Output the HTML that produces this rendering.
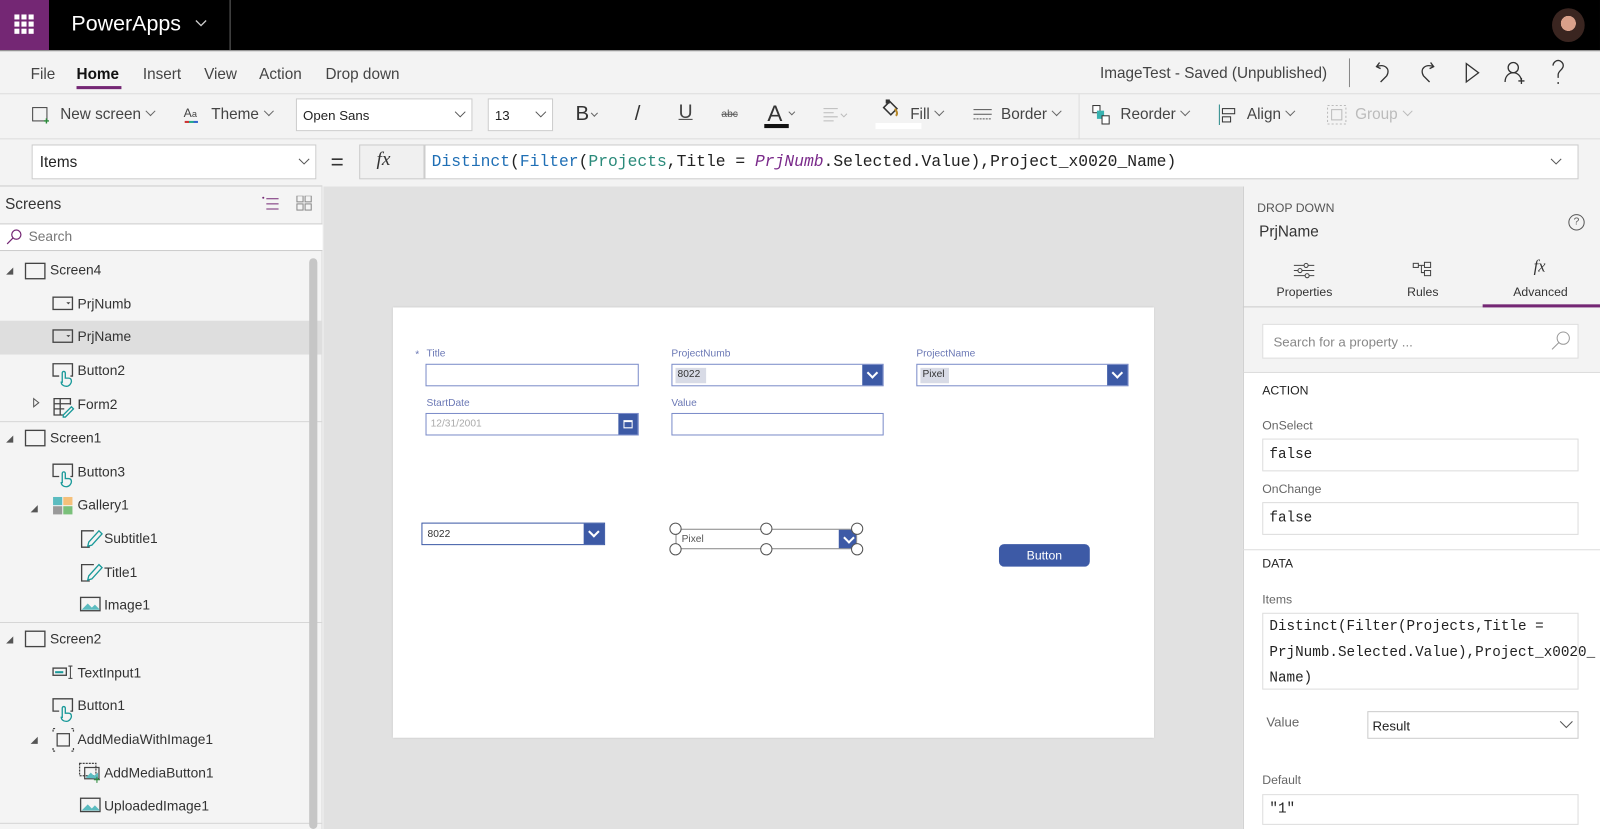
<!DOCTYPE html>
<html><head><meta charset="utf-8">
<style>
*{box-sizing:border-box;margin:0;padding:0}
html,body{width:1600px;height:829px;overflow:hidden;background:#f3f3f3;font-family:"Liberation Sans",sans-serif}
#s{position:absolute;left:0;top:0;width:1568px;height:809px;transform:scale(1.0204,1.0247);transform-origin:0 0}
.a{position:absolute}
.t{position:absolute;white-space:nowrap}
.mono{font-family:"Liberation Mono",monospace}
.chev{display:inline-block;width:7px;height:7px;border-right:1px solid #666;border-bottom:1px solid #666;transform:rotate(45deg);margin-left:6px;position:relative;top:-4px}
.tb{font-size:15px;color:#444;top:103px}
.row{position:absolute;left:0;width:302px;height:32px;font-size:13.5px;color:#333}
.row span{position:absolute;top:8px}
.lbl{position:absolute;font-size:10px;color:#6b78b5}
.inp{position:absolute;border:1px solid #7b8cc9;background:#fff}
.dbtn{position:absolute;right:0;top:0;bottom:0;width:20px;background:#3d5aa6}
.dbtn:after{content:"";position:absolute;left:6px;top:4px;width:6px;height:6px;border-right:2px solid #fff;border-bottom:2px solid #fff;transform:rotate(45deg)}
.h{position:absolute;width:12px;height:12px;border:1px solid #555;border-radius:50%;background:#fff}
.pl{position:absolute;left:1237px;font-size:12px;color:#666}
.pi{position:absolute;left:1237px;width:310px;background:#fff;border:1px solid #ddd;font-family:"Liberation Mono",monospace;font-size:14px;color:#222;padding-left:6px}
</style></head><body><div id="s">
<div class="a" style="left:0;top:0;width:1568px;height:49px;background:#000"></div>
<div class="a" style="left:0;top:0;width:48px;height:49px;background:#742774"></div>
<svg class="a" style="left:14px;top:14px" width="20" height="20"><g fill="#fff"><rect x="0" y="0" width="5" height="5"/><rect x="7" y="0" width="5" height="5"/><rect x="14" y="0" width="5" height="5"/><rect x="0" y="7" width="5" height="5"/><rect x="7" y="7" width="5" height="5"/><rect x="14" y="7" width="5" height="5"/><rect x="0" y="14" width="5" height="5"/><rect x="7" y="14" width="5" height="5"/><rect x="14" y="14" width="5" height="5"/></g></svg>
<div class="t" style="left:70px;top:12px;font-size:21px;color:#fff">PowerApps</div>
<svg class="a" style="left:191px;top:19px" width="12" height="8"><path d="M1 1l5 5 5-5" stroke="#ccc" fill="none" stroke-width="1.3"/></svg>
<div class="a" style="left:225px;top:0;width:1px;height:49px;background:#666"></div>
<div class="a" style="left:1521px;top:8px;width:32px;height:33px;border-radius:50%;background:radial-gradient(circle at 50% 45%,#d9a08a 0 30%,#3a2520 31% 100%)"></div>
<div class="a" style="left:0;top:49px;width:1568px;height:43px;background:#f3f3f3;border-top:1px solid #888;border-bottom:1px solid #ddd"></div>
<div class="t" style="left:30px;top:64px;font-size:15px;color:#444">File</div>
<div class="t" style="left:75px;top:64px;font-size:15px;color:#111;font-weight:bold">Home</div>
<div class="a" style="left:75px;top:84px;width:44px;height:3px;background:#742774"></div>
<div class="t" style="left:140px;top:64px;font-size:15px;color:#444">Insert</div>
<div class="t" style="left:200px;top:64px;font-size:15px;color:#444">View</div>
<div class="t" style="left:254px;top:64px;font-size:15px;color:#444">Action</div>
<div class="t" style="left:319px;top:64px;font-size:15px;color:#444">Drop down</div>
<div class="t" style="left:1078px;top:63px;font-size:15px;color:#444">ImageTest - Saved (Unpublished)</div>
<div class="a" style="left:1322px;top:57px;width:1px;height:28px;background:#888"></div>
<svg class="a" style="left:1346px;top:58px" width="200" height="26" fill="none" stroke="#333" stroke-width="1.3">
<path d="M6 3l-3 4 4 2M3 7c8-3 14 2 10 9l-6 6"/>
<path d="M56 3l3 4-4 2M59 7c-8-3-14 2-10 9l6 6"/>
<path d="M91 4v18l12-9z"/>
<circle cx="137" cy="8" r="5"/><path d="M129 22c0-6 4-9 8-9s8 3 8 9M145 18v6M142 21h6"/>
<path d="M176 6c0-3 3-5 5-5s5 2 5 5c0 4-5 5-5 9v3M181 22v2"/>
</svg>
<div class="a" style="left:0;top:92px;width:1568px;height:44px;border-bottom:1px solid #ddd"></div>
<svg class="a" style="left:31px;top:104px" width="18" height="18" fill="none"><rect x="1" y="1" width="14" height="13" stroke="#444"/><path d="M12 14h5M14.5 11.5v5" stroke="#2a8a3a" stroke-width="1.4"/></svg>
<div class="t tb" style="left:59px">New screen<span class="chev"></span></div>
<div class="t" style="left:180px;top:103px;font-size:12px;color:#444">A<span style="font-size:9px">a</span></div>
<div class="a" style="left:181px;top:118px;width:13px;height:2px;background:linear-gradient(90deg,#c33 0 33%,#2a8 33% 66%,#36c 66%)"></div>
<div class="t tb" style="left:207px">Theme<span class="chev"></span></div>
<div class="a" style="left:290px;top:96px;width:173px;height:32px;background:#fff;border:1px solid #ccc"></div>
<div class="t" style="left:297px;top:105px;font-size:13px;color:#222">Open Sans</div>
<svg class="a" style="left:445px;top:108px" width="12" height="8"><path d="M1 1l5 5 5-5" stroke="#555" fill="none"/></svg>
<div class="a" style="left:478px;top:96px;width:64px;height:32px;background:#fff;border:1px solid #ccc"></div>
<div class="t" style="left:485px;top:105px;font-size:13px;color:#222">13</div>
<svg class="a" style="left:524px;top:108px" width="12" height="8"><path d="M1 1l5 5 5-5" stroke="#555" fill="none"/></svg>
<div class="t" style="left:564px;top:100px;font-size:20px;color:#333">B<span class="chev" style="width:5px;height:5px;margin-left:3px"></span></div>
<div class="t" style="left:622px;top:100px;font-size:20px;color:#333">/</div>
<div class="t" style="left:665px;top:99px;font-size:19px;color:#444;text-decoration:underline">U</div>
<div class="t" style="left:707px;top:106px;font-size:10px;color:#555;text-decoration:line-through">abc</div>
<div class="t" style="left:752px;top:98px;font-size:22px;color:#333">A</div>
<div class="a" style="left:749px;top:121px;width:24px;height:4px;background:#111"></div>
<svg class="a" style="left:772px;top:108px" width="8" height="6"><path d="M1 1l3 3 3-3" stroke="#666" fill="none"/></svg>
<svg class="a" style="left:807px;top:104px" width="26" height="16" stroke="#bbb"><path d="M0 2h14M0 6h10M0 10h14M0 14h10M17 7l3 3 3-3" fill="none"/></svg>
<svg class="a" style="left:862px;top:97px" width="22" height="22"><path d="M4 8l6-6 7 7-6 6z" fill="none" stroke="#333" stroke-width="1.5"/><path d="M15 9c2 3 3 5 1 7" stroke="#b8892a" stroke-width="2" fill="none"/><rect x="6" y="0" width="4" height="4" fill="#333"/></svg>
<div class="a" style="left:858px;top:120px;width:45px;height:6px;background:#fff"></div>
<div class="t tb" style="left:892px">Fill<span class="chev"></span></div>
<svg class="a" style="left:954px;top:106px" width="18" height="12" stroke="#555"><path d="M0 1h18M0 5.5h18" /><path d="M0 10h18" stroke-dasharray="2 1"/></svg>
<div class="t tb" style="left:981px">Border<span class="chev"></span></div>
<div class="a" style="left:1057px;top:92px;width:1px;height:44px;background:#ddd"></div>
<svg class="a" style="left:1070px;top:102px" width="18" height="20"><rect x="1" y="1" width="7" height="7" fill="#fff" stroke="#333"/><rect x="5" y="6" width="7" height="8" fill="#38b2b0"/><rect x="10" y="11" width="7" height="8" fill="#fff" stroke="#333"/></svg>
<div class="t tb" style="left:1098px">Reorder<span class="chev"></span></div>
<svg class="a" style="left:1194px;top:102px" width="20" height="20" fill="none" stroke="#333"><path d="M1 0v20" stroke="#2a8a8a"/><rect x="4" y="4" width="12" height="5"/><rect x="4" y="12" width="8" height="5"/></svg>
<div class="t tb" style="left:1222px">Align<span class="chev"></span></div>
<svg class="a" style="left:1300px;top:102px" width="20" height="20" fill="none" stroke="#bbb" stroke-dasharray="2 2"><rect x="1" y="1" width="18" height="18"/><rect x="5" y="5" width="10" height="10" stroke-dasharray="0"/></svg>
<div class="t tb" style="left:1328px;color:#bbb">Group<span class="chev" style="border-color:#bbb"></span></div>
<div class="a" style="left:31px;top:141px;width:279px;height:34px;background:#fff;border:1px solid #ccc"></div>
<div class="t" style="left:39px;top:150px;font-size:15px;color:#222">Items</div>
<svg class="a" style="left:292px;top:154px" width="12" height="8"><path d="M1 1l5 5 5-5" stroke="#555" fill="none"/></svg>
<div class="t" style="left:324px;top:145px;font-size:22px;color:#333">=</div>
<div class="a" style="left:352px;top:141px;width:64px;height:34px;background:#f0f0f0;border:1px solid #ccc"></div>
<div class="t" style="left:369px;top:145px;font-size:19px;font-style:italic;font-family:'Liberation Serif',serif;color:#333">fx</div>
<div class="a" style="left:416px;top:141px;width:1131px;height:34px;background:#fff;border:1px solid #ccc"></div>
<div class="t mono" style="left:423px;top:149px;font-size:16px;color:#222"><span style="color:#1f6fb5">Distinct</span>(<span style="color:#1f6fb5">Filter</span>(<span style="color:#2a8a7a">Projects</span>,Title = <i style="color:#7a2a8a">PrjNumb</i>.Selected.Value),Project_x0020_Name)</div>
<svg class="a" style="left:1519px;top:154px" width="12" height="8"><path d="M1 1l5 5 5-5" stroke="#555" fill="none"/></svg>
<div class="a" style="left:0;top:181px;width:316px;height:628px;background:#f4f4f4;border-right:1px solid #ddd;border-top:1px solid #ccc"></div>
<div class="t" style="left:5px;top:191px;font-size:15px;color:#333">Screens</div>
<svg class="a" style="left:256px;top:191px" width="50" height="16"><path d="M5 3h12M5 8h12M5 13h12" stroke="#742774"/><circle cx="2" cy="2" r="1" fill="#742774"/><g fill="none" stroke="#888"><rect x="35" y="0" width="6" height="6"/><rect x="43" y="0" width="6" height="6"/><rect x="35" y="8" width="6" height="6"/><rect x="43" y="8" width="6" height="6"/></g></svg>
<div class="a" style="left:0;top:218px;width:316px;height:27px;background:#fff;border-top:1px solid #ccc;border-bottom:1px solid #ccc"></div>
<svg class="a" style="left:6px;top:223px" width="16" height="16" fill="none" stroke="#742774" stroke-width="1.2"><circle cx="10" cy="6" r="4.5"/><path d="M7 9l-6 6"/></svg>
<div class="t" style="left:28px;top:223px;font-size:13.5px;color:#777">Search</div>
<div class="a" style="left:0;top:313px;width:316px;height:33px;background:#dedede"></div>
<div class="a" style="left:0;top:411px;width:316px;height:1px;background:#d6d6d6"></div>
<div class="a" style="left:0;top:607px;width:316px;height:1px;background:#d6d6d6"></div>
<div class="a" style="left:0;top:803px;width:316px;height:1px;background:#d6d6d6"></div>
<div class="a" style="left:303px;top:252px;width:8px;height:557px;background:#c6c6c6;border-radius:4px"></div>
<svg class="a" style="left:0;top:248px" width="300" height="560">
<g fill="#555"><path d="M6 20l7-7v7z"/><path d="M6 184l7-7v7z"/><path d="M30 252l7-7v7z"/><path d="M6 380l7-7v7z"/><path d="M30 478l7-7v7z"/></g>
<path d="M33 141l5 4-5 4z" fill="none" stroke="#555"/>
<g fill="none" stroke="#444" stroke-width="1.3">
<rect x="25" y="9" width="19" height="15"/><rect x="25" y="172" width="19" height="15"/><rect x="25" y="368" width="19" height="15"/>
<rect x="52" y="42" width="19" height="12"/><rect x="52" y="74" width="19" height="12"/>
</g>
<path d="M65 47l2 2 2-2z" fill="#444"/><path d="M65 79l2 2 2-2z" fill="#444"/>
<g fill="none" stroke-width="1.3">
<path d="M58 119h-6v-12h19v12h-2" stroke="#444"/><path d="M61 125v-9a1.5 1.5 0 013 0v5h3c2 0 3 1 3 3s-2 5-5 5-5-2-5-4z" stroke="#1a9a9a"/>
<path d="M58 217h-6v-12h19v12h-2" stroke="#444"/><path d="M61 223v-9a1.5 1.5 0 013 0v5h3c2 0 3 1 3 3s-2 5-5 5-5-2-5-4z" stroke="#1a9a9a"/>
<path d="M58 446h-6v-12h19v12h-2" stroke="#444"/><path d="M61 452v-9a1.5 1.5 0 013 0v5h3c2 0 3 1 3 3s-2 5-5 5-5-2-5-4z" stroke="#1a9a9a"/>
<path d="M62 157h-9v-16h16v6M53 146h16M53 151h10M59 141v16" stroke="#444"/><path d="M62 157l8-8 2 2-8 8h-2z" stroke="#1a9a9a"/>
</g>
<rect x="52" y="237" width="9" height="8" fill="#5bbcc0"/><rect x="62" y="237" width="9" height="8" fill="#f5c07a"/><rect x="52" y="246" width="9" height="8" fill="#999"/><rect x="62" y="246" width="9" height="8" fill="#7ac07a"/>
<g fill="none" stroke-width="1.3"><path d="M88 286h-8v-16h12" stroke="#444"/><path d="M97 270l-10 11-1 4 4-1 10-11z" stroke="#1a9a9a"/>
<path d="M88 319h-8v-16h12" stroke="#444"/><path d="M97 303l-10 11-1 4 4-1 10-11z" stroke="#1a9a9a"/></g>
<rect x="79" y="335" width="19" height="13" fill="none" stroke="#444" stroke-width="1.3"/><path d="M80 347l6-6 4 4 3-3 5 5z" fill="#5bbcc0"/>
<rect x="79" y="531" width="19" height="13" fill="none" stroke="#444" stroke-width="1.3"/><path d="M80 543l6-6 4 4 3-3 5 5z" fill="#5bbcc0"/>
<rect x="52" y="404" width="13" height="7" fill="none" stroke="#444" stroke-width="1.3"/><rect x="54" y="407" width="8" height="2" fill="#1a9a9a"/><path d="M67 402h4M69 402v12M67 414h4" stroke="#444" fill="none"/>
<g fill="none" stroke="#444" stroke-width="1.2"><rect x="56" y="468" width="12" height="12"/><path d="M52 466v-3h3M72 466v-3h-3M52 482v3h3M72 482v3h-3" stroke-dasharray="2 1"/></g>
<g fill="none" stroke="#444" stroke-width="1.2"><rect x="78" y="497" width="16" height="12" stroke-dasharray="2 1"/><rect x="83" y="501" width="14" height="11"/></g><path d="M84 511l5-5 3 3 4-3v6z" fill="#5bbcc0"/><path d="M95 510v6M92 513h6" stroke="#2a8a3a"/>
</svg>
<div class="row" style="top:248px"><span style="left:49px">Screen4</span></div>
<div class="row" style="top:281px"><span style="left:76px">PrjNumb</span></div>
<div class="row" style="top:313px"><span style="left:76px">PrjName</span></div>
<div class="row" style="top:346px"><span style="left:76px">Button2</span></div>
<div class="row" style="top:379px"><span style="left:76px">Form2</span></div>
<div class="row" style="top:412px"><span style="left:49px">Screen1</span></div>
<div class="row" style="top:445px"><span style="left:76px">Button3</span></div>
<div class="row" style="top:477px"><span style="left:76px">Gallery1</span></div>
<div class="row" style="top:510px"><span style="left:102px">Subtitle1</span></div>
<div class="row" style="top:543px"><span style="left:102px">Title1</span></div>
<div class="row" style="top:575px"><span style="left:102px">Image1</span></div>
<div class="row" style="top:608px"><span style="left:49px">Screen2</span></div>
<div class="row" style="top:641px"><span style="left:76px">TextInput1</span></div>
<div class="row" style="top:673px"><span style="left:76px">Button1</span></div>
<div class="row" style="top:706px"><span style="left:76px">AddMediaWithImage1</span></div>
<div class="row" style="top:739px"><span style="left:102px">AddMediaButton1</span></div>
<div class="row" style="top:771px"><span style="left:102px">UploadedImage1</span></div>
<div class="a" style="left:317px;top:182px;width:901px;height:627px;background:#e1e1e1"></div>
<div class="a" style="left:385px;top:300px;width:746px;height:420px;background:#fff;box-shadow:0 0 2px rgba(0,0,0,.2)"></div>
<div class="t" style="left:407px;top:341px;font-size:10px;color:#6b78b5">*</div>
<div class="t lbl" style="left:418px;top:340px">Title</div>
<div class="inp" style="left:417px;top:355px;width:209px;height:22px"></div>
<div class="t lbl" style="left:658px;top:340px">ProjectNumb</div>
<div class="inp" style="left:658px;top:355px;width:208px;height:22px"><div class="a" style="left:3px;top:3px;width:30px;height:15px;background:#d8dbe6"></div><div class="t" style="left:5px;top:4px;font-size:10px;color:#333">8022</div><div class="dbtn"></div></div>
<div class="t lbl" style="left:898px;top:340px">ProjectName</div>
<div class="inp" style="left:898px;top:355px;width:208px;height:22px"><div class="a" style="left:3px;top:3px;width:28px;height:15px;background:#d8dbe6"></div><div class="t" style="left:5px;top:4px;font-size:10px;color:#333">Pixel</div><div class="dbtn"></div></div>
<div class="t lbl" style="left:418px;top:388px">StartDate</div>
<div class="inp" style="left:417px;top:403px;width:209px;height:22px"><div class="t" style="left:4px;top:4px;font-size:10px;color:#aaa">12/31/2001</div><div class="a" style="right:0;top:0;bottom:0;width:19px;background:#3d5aa6"><div class="a" style="left:5px;top:6px;width:9px;height:8px;border:1px solid #fff;border-top-width:2px"></div></div></div>
<div class="t lbl" style="left:658px;top:388px">Value</div>
<div class="inp" style="left:658px;top:403px;width:208px;height:22px"></div>
<div class="inp" style="left:413px;top:510px;width:180px;height:22px;border-color:#3d5aa6"><div class="t" style="left:5px;top:5px;font-size:10px;color:#333">8022</div><div class="dbtn"></div></div>
<div class="inp" style="left:662px;top:516px;width:178px;height:20px;border:1px solid #888"><div class="t" style="left:5px;top:4px;font-size:10px;color:#555">Pixel</div><div class="dbtn" style="width:17px"></div></div>
<div class="h" style="left:656px;top:510px"></div><div class="h" style="left:745px;top:510px"></div><div class="h" style="left:834px;top:510px"></div>
<div class="h" style="left:656px;top:530px"></div><div class="h" style="left:745px;top:530px"></div><div class="h" style="left:834px;top:530px"></div>
<div class="a" style="left:979px;top:531px;width:89px;height:22px;background:#3d5aa6;border-radius:5px;color:#fff;font-size:12px;text-align:center;line-height:22px">Button</div>
<div class="a" style="left:1218px;top:182px;width:350px;height:181px;background:#f3f3f3;border-left:1px solid #ccc"></div>
<div class="a" style="left:1218px;top:363px;width:350px;height:446px;background:#fff;border-left:1px solid #ccc;border-top:1px solid #ddd"></div>
<div class="t" style="left:1232px;top:196px;font-size:12px;color:#555">DROP DOWN</div>
<div class="t" style="left:1234px;top:218px;font-size:15px;color:#333">PrjName</div>
<div class="a" style="left:1537px;top:209px;width:16px;height:16px;border:1px solid #555;border-radius:50%;font-size:10px;text-align:center;line-height:14px;color:#555">?</div>
<svg class="a" style="left:1267px;top:255px" width="22" height="18" stroke="#444" fill="#f3f3f3"><path d="M1 4h20M1 9h20M1 14h20"/><circle cx="13" cy="4" r="2"/><circle cx="7" cy="9" r="2"/><circle cx="14" cy="14" r="2"/></svg>
<div class="t" style="left:1251px;top:278px;font-size:12px;color:#333">Properties</div>
<svg class="a" style="left:1384px;top:255px" width="20" height="16" fill="none" stroke="#444"><rect x="1" y="2" width="5" height="4"/><rect x="12" y="1" width="6" height="5"/><rect x="12" y="9" width="6" height="5"/><path d="M6 4h6M9 4v7h3"/></svg>
<div class="t" style="left:1379px;top:278px;font-size:12px;color:#333">Rules</div>
<div class="t" style="left:1503px;top:252px;font-size:16px;font-style:italic;font-family:'Liberation Serif',serif;color:#333">fx</div>
<div class="t" style="left:1483px;top:278px;font-size:12px;color:#333">Advanced</div>
<div class="a" style="left:1218px;top:299px;width:350px;height:1px;background:#ccc"></div>
<div class="a" style="left:1453px;top:297px;width:115px;height:3px;background:#742774"></div>
<div class="a" style="left:1237px;top:316px;width:310px;height:34px;background:#fff;border:1px solid #ddd"></div>
<div class="t" style="left:1248px;top:326px;font-size:13px;color:#888">Search for a property ...</div>
<svg class="a" style="left:1520px;top:323px" width="20" height="20" fill="none" stroke="#999"><circle cx="12" cy="7" r="6"/><path d="M8 11l-7 7"/></svg>
<div class="t" style="left:1237px;top:374px;font-size:12px;color:#222">ACTION</div>
<div class="t pl" style="top:408px">OnSelect</div>
<div class="pi" style="top:428px;height:32px;line-height:31px">false</div>
<div class="t pl" style="top:470px">OnChange</div>
<div class="pi" style="top:490px;height:32px;line-height:31px">false</div>
<div class="a" style="left:1218px;top:536px;width:350px;height:1px;background:#ddd"></div>
<div class="t" style="left:1237px;top:543px;font-size:12px;color:#222">DATA</div>
<div class="t pl" style="top:578px">Items</div>
<div class="pi" style="top:598px;height:75px;line-height:25px;padding-top:1px;white-space:pre">Distinct(Filter(Projects,Title =
PrjNumb.Selected.Value),Project_x0020_
Name)</div>
<div class="t" style="left:1241px;top:697px;font-size:13px;color:#666">Value</div>
<div class="a" style="left:1340px;top:694px;width:207px;height:27px;background:#fff;border:1px solid #ccc"></div>
<div class="t" style="left:1345px;top:701px;font-size:13px;color:#222">Result</div>
<svg class="a" style="left:1528px;top:703px" width="14" height="9"><path d="M1 1l6 6 6-6" stroke="#555" fill="none"/></svg>
<div class="t pl" style="top:754px">Default</div>
<div class="pi" style="top:775px;height:30px;line-height:29px">"1"</div>
</div></body></html>
